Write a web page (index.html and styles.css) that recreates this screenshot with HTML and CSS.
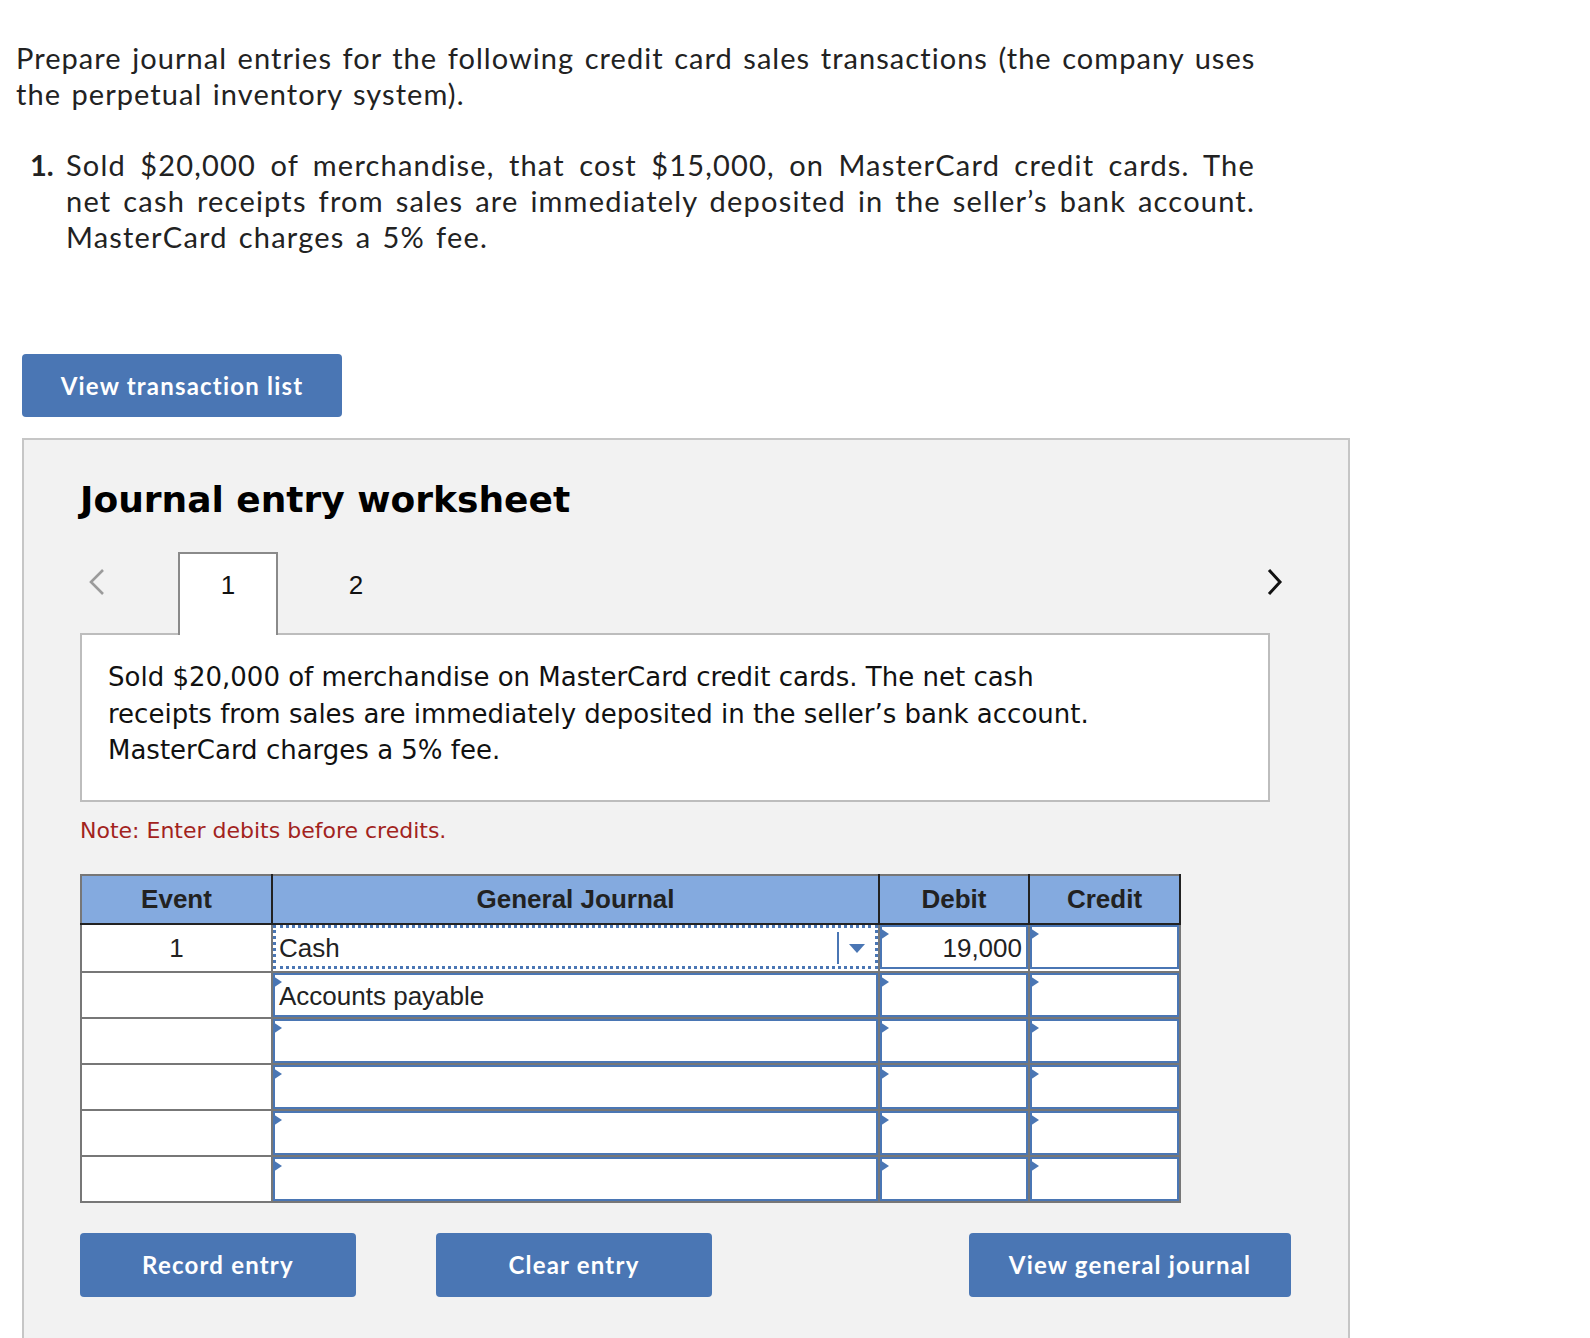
FILE: index.html
```html
<!DOCTYPE html>
<html lang="en">
<head>
<meta charset="utf-8">
<title>Journal entry worksheet</title>
<link rel="stylesheet" href="styles.css">
</head>
<body>
<div class="page">
  <p class="intro">Prepare journal entries for the following credit card sales transactions (the company uses the perpetual inventory system).</p>
  <ol class="items">
    <li><span class="num">1.</span><span class="item-text">Sold $20,000 of merchandise, that cost $15,000, on MasterCard credit cards. The net cash receipts from sales are immediately deposited in the seller’s bank account. MasterCard charges a 5% fee.</span></li>
  </ol>

  <button class="btn btn-list" type="button">View transaction list</button>

  <section class="worksheet">
    <h2>Journal entry worksheet</h2>

    <div class="tabs">
      <span class="arrow prev">
        <svg width="17" height="28" viewBox="0 0 17 28"><polyline points="15,2 3,14 15,26" fill="none" stroke="#9b9b9b" stroke-width="2.6"/></svg>
      </span>
      <div class="tab active">1</div>
      <div class="tab">2</div>
      <span class="arrow next">
        <svg width="17" height="28" viewBox="0 0 17 28"><polyline points="3,2 14,14 3,26" fill="none" stroke="#111" stroke-width="3"/></svg>
      </span>
    </div>

    <div class="desc">
      <p>Sold $20,000 of merchandise on MasterCard credit cards. The net cash receipts from sales are immediately deposited in the seller’s bank account. MasterCard charges a 5% fee.</p>
    </div>

    <p class="note">Note: Enter debits before credits.</p>

    <table class="journal">
      <colgroup>
        <col class="c-event"><col class="c-acct"><col class="c-amt"><col class="c-amt2">
      </colgroup>
      <thead>
        <tr><th>Event</th><th>General Journal</th><th>Debit</th><th>Credit</th></tr>
      </thead>
      <tbody>
        <tr>
          <td class="event">1</td>
          <td><div class="field focus"><span class="val">Cash</span><span class="dd"><svg width="16" height="9" viewBox="0 0 16 9"><polygon points="0,0 16,0 8,9" fill="#4a76b4"/></svg></span></div></td>
          <td><div class="field mark num-val">19,000</div></td>
          <td><div class="field mark"></div></td>
        </tr>
        <tr>
          <td class="event"></td>
          <td><div class="field mark">Accounts payable</div></td>
          <td><div class="field mark"></div></td>
          <td><div class="field mark"></div></td>
        </tr>
        <tr>
          <td class="event"></td>
          <td><div class="field mark"></div></td>
          <td><div class="field mark"></div></td>
          <td><div class="field mark"></div></td>
        </tr>
        <tr>
          <td class="event"></td>
          <td><div class="field mark"></div></td>
          <td><div class="field mark"></div></td>
          <td><div class="field mark"></div></td>
        </tr>
        <tr>
          <td class="event"></td>
          <td><div class="field mark"></div></td>
          <td><div class="field mark"></div></td>
          <td><div class="field mark"></div></td>
        </tr>
        <tr>
          <td class="event"></td>
          <td><div class="field mark"></div></td>
          <td><div class="field mark"></div></td>
          <td><div class="field mark"></div></td>
        </tr>
      </tbody>
    </table>

    <div class="actions">
      <button class="btn btn-record" type="button">Record entry</button>
      <button class="btn btn-clear" type="button">Clear entry</button>
      <button class="btn btn-gj" type="button">View general journal</button>
    </div>
  </section>
</div>
</body>
</html>
```

FILE: styles.css
```css
* { box-sizing: border-box; }

html, body {
  margin: 0;
  background: #fff;
}

body {
  font-family: Lato, "Liberation Sans", sans-serif;
  color: #222;
}

.page {
  padding: 40px 0 0 16px;
}

/* question text */
.intro {
  width: 1275px;
  margin: 0;
  font-size: 29px;
  line-height: 35.5px;
  letter-spacing: 1.05px;
  word-spacing: 2px;
}

.items {
  width: 1239px;
  list-style: none;
  margin: 36px 0 0;
  padding: 0;
}

.items li {
  display: flex;
  font-size: 29px;
  line-height: 36px;
  letter-spacing: 1.2px;
  word-spacing: 2.5px;
}

.items .num {
  flex: 0 0 50px;
  padding-left: 14px;
  font-weight: 700;
  letter-spacing: 0;
}

.items .item-text {
  flex: 1;
  text-align: justify;
}

/* buttons */
.btn {
  display: inline-flex;
  align-items: center;
  justify-content: center;
  border: none;
  border-radius: 4px;
  background: #4a76b4;
  color: #fff;
  font-family: Lato, "Liberation Sans", sans-serif;
  font-weight: 700;
  font-size: 24px;
  letter-spacing: 1.2px;
  padding: 0;
  cursor: pointer;
}

.btn-list {
  display: flex;
  width: 320px;
  height: 63px;
  margin: 99px 0 0 6px;
}

/* worksheet panel */
.worksheet {
  width: 1328px;
  margin: 21px 0 0 6px;
  padding: 40px 78px 80px 56px;
  border: 2px solid #c6c6c6;
  background: #f2f2f2;
}

.worksheet h2 {
  margin: 0;
  font-family: "DejaVu Sans", Verdana, sans-serif;
  font-weight: 700;
  font-size: 36px;
  line-height: 40px;
  color: #000;
}

.tabs {
  display: flex;
  align-items: flex-start;
  height: 81px;
  margin: 32px -21px 0 0;
}

.arrow {
  display: flex;
  justify-content: center;
  padding-top: 16px;
}

.arrow.prev { width: 32px; }

.arrow.next {
  width: 34px;
  margin-left: auto;
}

.tab {
  width: 100px;
  height: 83px;
  padding-top: 16px;
  border: 2px solid transparent;
  border-bottom: none;
  text-align: center;
  font-family: "Liberation Sans", Arial, sans-serif;
  font-size: 26px;
  line-height: 30px;
  color: #111;
}

.tab.active {
  position: relative;
  z-index: 1;
  margin-left: 66px;
  border-color: #8a8a8a;
  background: #fff;
}

.tab + .tab { margin-left: 28px; }

.desc {
  padding: 24px 26px 31px;
  border: 2px solid #bdbdbd;
  background: #fff;
}

.desc p {
  max-width: 1015px;
  margin: 0;
  font-family: "DejaVu Sans", Verdana, sans-serif;
  font-size: 26px;
  line-height: 36.5px;
  color: #111;
}

.note {
  margin: 15px 0 0;
  font-family: "DejaVu Sans", Verdana, sans-serif;
  font-size: 22px;
  line-height: 28px;
  color: #a2231d;
}

/* journal table */
.journal {
  width: 1099px;
  margin-top: 29px;
  border-collapse: collapse;
  table-layout: fixed;
  font-family: "Liberation Sans", Arial, sans-serif;
  font-size: 26px;
  color: #222;
}

.c-event { width: 191px; }
.c-acct { width: 607px; }
.c-amt { width: 150px; }
.c-amt2 { width: 151px; }

.journal th {
  padding: 0;
  line-height: 47px;
  background: #84aadf;
  font-weight: 700;
  border: 2px solid #222;
  border-top-color: #777;
}

.journal th:first-child { border-left-color: #777; }

.journal td {
  padding: 0;
  border: 2px solid #777;
  background: #fff;
  vertical-align: top;
}

.journal td.event {
  height: 44px;
  text-align: center;
  line-height: 46px;
}

.field {
  position: relative;
  height: 44px;
  padding: 0 4px;
  border: 2px solid #4a76b4;
  background: #fff;
  line-height: 42px;
  white-space: nowrap;
}

/* small entry marker at the top-left of each input */
.field.mark::before {
  content: "";
  position: absolute;
  left: -2px;
  top: 1px;
  border-left: 9px solid #4a76b4;
  border-top: 6.5px solid transparent;
  border-bottom: 6.5px solid transparent;
}

.field.num-val { text-align: right; }

.field.focus {
  display: flex;
  align-items: center;
  padding: 3px 0 0 3px;
  border: 3px dotted #4a76b4;
  line-height: normal;
}

.field.focus .val { flex: 1; }

.field.focus .dd {
  display: flex;
  align-items: center;
  justify-content: center;
  width: 38px;
  height: 32px;
  border-left: 2px solid #4a76b4;
}

.actions {
  display: flex;
  margin: 30px -21px 0 0;
}

.btn-record,
.btn-clear {
  width: 276px;
  height: 64px;
}

.btn-clear { margin-left: 80px; }

.btn-gj {
  width: 322px;
  height: 64px;
  margin-left: auto;
}
```
